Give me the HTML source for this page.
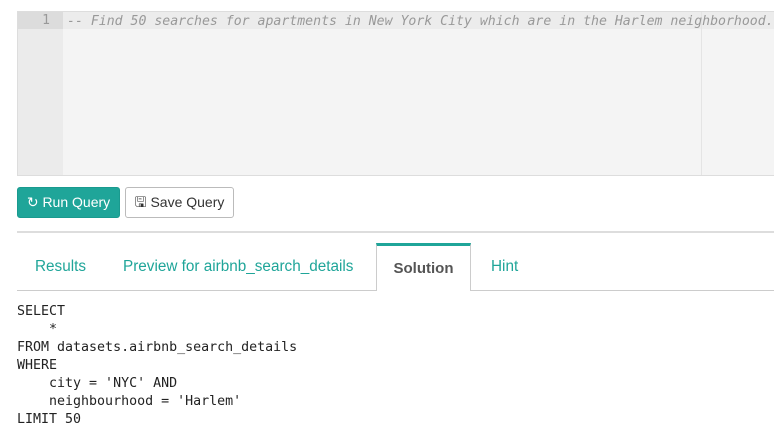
<!DOCTYPE html>
<html><head><style>
body{margin:0;width:774px;height:434px;overflow:hidden;background:#fff;font-family:"Liberation Sans",sans-serif;position:relative}
.ed{position:absolute;left:17px;top:11px;width:770px;height:163px;border:1px solid #ddd;background:#f4f4f4}
.gut{position:absolute;left:0;top:0;width:45px;height:163px;background:#ebebeb}
.hl{position:absolute;left:0;top:0;width:770px;height:17px;background:#ececec}
.ghl{position:absolute;left:0;top:0;width:45px;height:17px;background:#dcdcdc;color:#999;font:13px "DejaVu Sans Mono",monospace;text-align:right;line-height:17px;box-sizing:border-box;padding-right:13px}
.cm{position:absolute;left:49px;top:1px;font:italic 13.2px "DejaVu Sans Mono",monospace;line-height:17px;color:#999;white-space:pre}
.pm{position:absolute;left:683px;top:0;width:1px;height:163px;background:#e4e4e4}
.btn{position:absolute;top:187px;height:31px;box-sizing:border-box;border-radius:3px;font-size:14px;line-height:29px;text-align:center}
.run{left:17px;width:103px;background:#1fa599;color:#fff;border:1px solid #1a9a8f}
.save{left:125px;width:109px;background:#fff;color:#333;border:1px solid #bbb}
.tl{position:absolute;left:17px;top:231px;width:757px;height:2px;background:#ddd}
.bl{position:absolute;left:17px;top:290px;width:757px;height:1px;background:#ccc}
.tab{position:absolute;top:258px;font-size:15.3px;color:#1fa599}
.sol{position:absolute;left:376px;top:243px;width:95px;height:48px;box-sizing:border-box;border:1px solid #ccc;border-top:3px solid #1fa599;border-bottom:none;background:#fff;text-align:center;font-weight:bold;color:#555;font-size:15px;line-height:46px}
pre{position:absolute;left:17px;top:303px;margin:0;font:13.3px "DejaVu Sans Mono",monospace;line-height:18px;color:#222}
</style></head><body>
<div class="ed"><div class="gut"></div><div class="hl"></div><div class="ghl">1</div><div class="pm"></div><div class="cm">-- Find 50 searches for apartments in New York City which are in the Harlem neighborhood.</div></div>
<div class="btn run">&#x21bb; Run Query</div>
<div class="btn save">&#x1F5AB; Save Query</div>
<div class="tl"></div>
<div class="bl"></div>
<div class="tab" style="left:35px">Results</div>
<div class="tab" style="left:123px">Preview for airbnb_search_details</div>
<div class="sol">Solution</div>
<div class="tab" style="left:491px">Hint</div>
<pre>SELECT
    *
FROM datasets.airbnb_search_details
WHERE
    city = 'NYC' AND
    neighbourhood = 'Harlem'
LIMIT 50</pre>
</body></html>
